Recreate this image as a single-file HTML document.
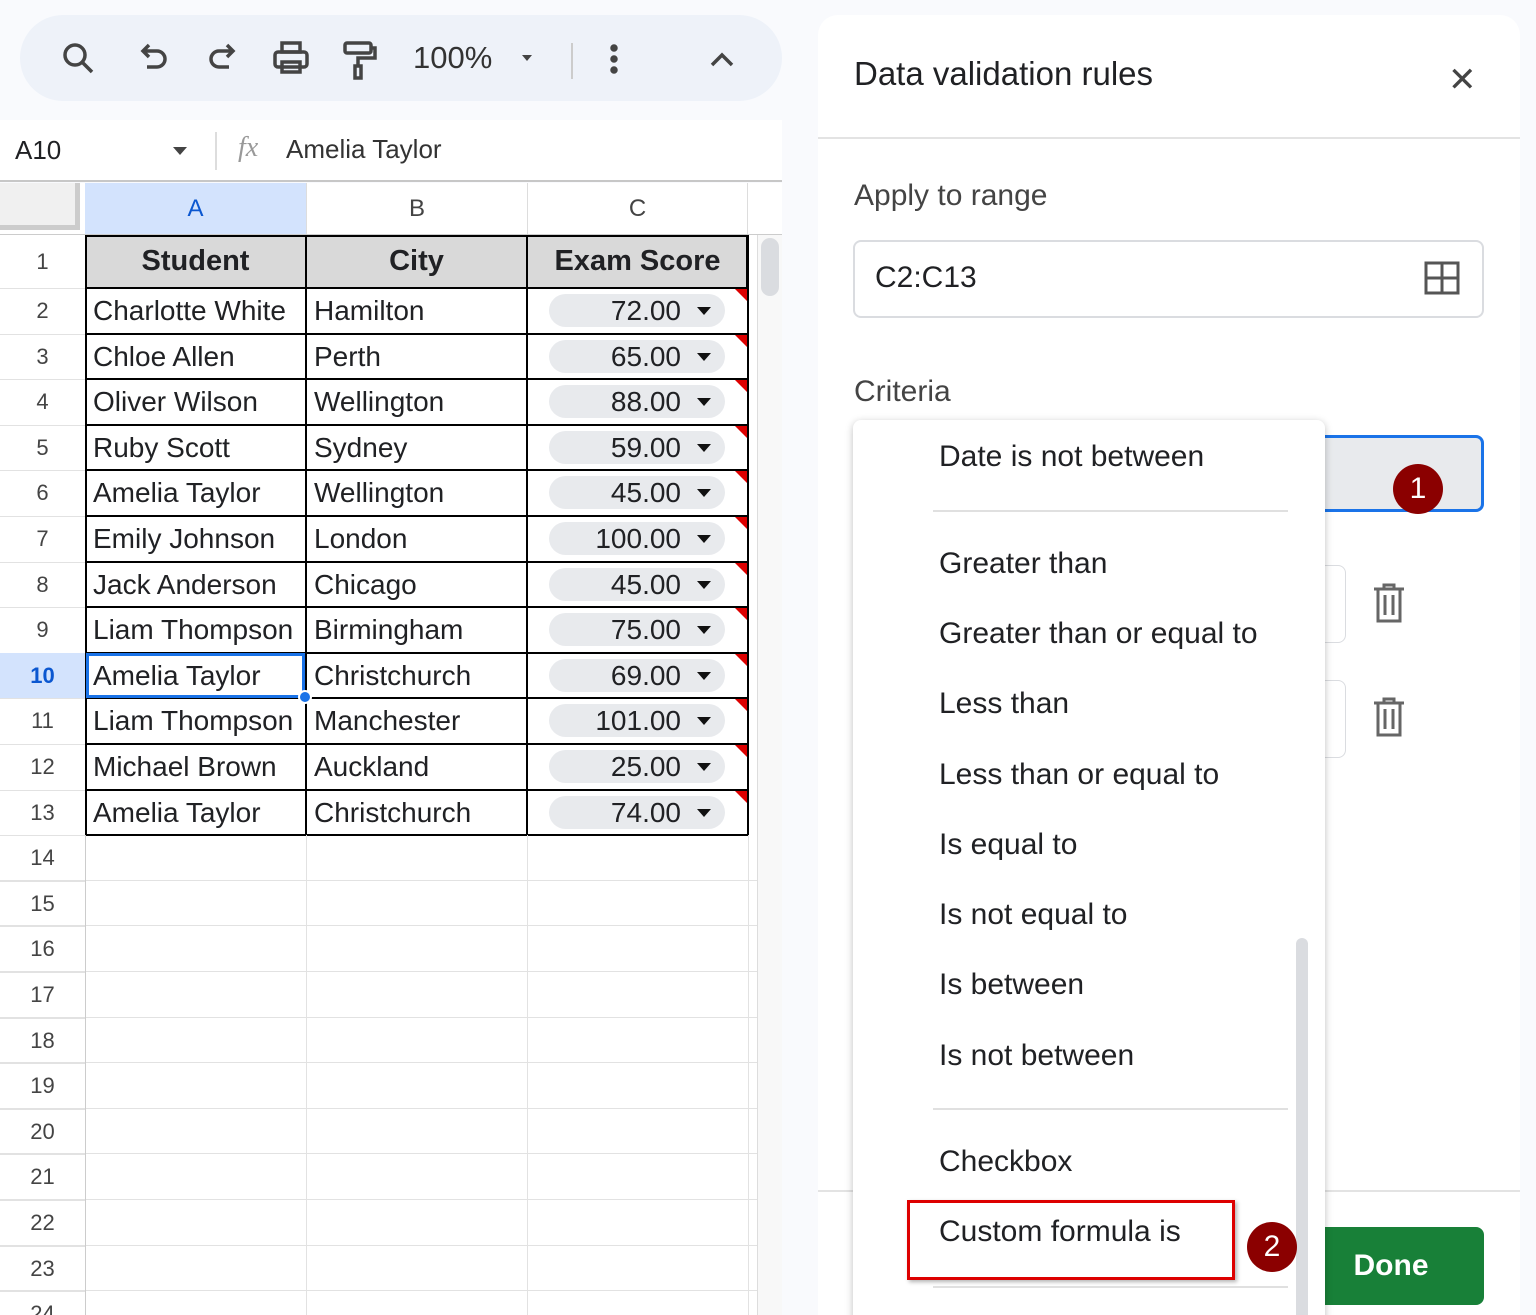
<!DOCTYPE html>
<html style="overflow:hidden;height:1315px"><head><style>
*{margin:0;padding:0;box-sizing:border-box}
body{width:1536px;height:1315px;overflow:hidden;background:#f9fafd;font-family:"Liberation Sans",sans-serif;position:relative;color:#202124}
.abs{position:absolute}
.tb{left:20px;top:15px;width:762px;height:86px;border-radius:43px;background:#eef2f9}
.fbar{left:0;top:120px;width:782px;height:62px;background:#fff;border-bottom:2px solid #c7c7c7}
.grid{left:0;top:183px;width:782px;height:1132px;background:#fff;overflow:hidden}
.cell{position:absolute;font-size:28px;white-space:nowrap;overflow:hidden;line-height:45px}
.rn{position:absolute;left:0;width:85px;text-align:center;font-size:22px;color:#444}
.pill{position:absolute;left:549px;width:176px;height:33px;border-radius:17px;background:#e8eaed}
.panel{left:818px;top:15px;width:702px;height:1340px;background:#fff;border-radius:20px 20px 0 0}
.menu{left:853px;top:420px;width:472px;height:940px;background:#fff;border-radius:8px;box-shadow:0 2px 8px rgba(0,0,0,.25)}
.mi{position:absolute;left:86px;font-size:30px;color:#202124;white-space:nowrap}
.sep{position:absolute;left:80px;width:355px;height:2px;background:#e0e0e0}
.badge{position:absolute;width:50px;height:50px;border-radius:50%;background:#8b0000;color:#fff;font-size:30px;text-align:center;line-height:50px}
</style></head><body>
<div class="abs tb"></div>
<svg class="abs" style="left:55px;top:35px" width="720" height="50" viewBox="0 0 720 50" fill="none" stroke="#444" stroke-width="3.5">
<circle cx="20" cy="20" r="10"/><path d="M27 27l10 10"/>
<path d="M88 16h14a8 8 0 010 16h-10M94 10l-6 6 6 6"/>
<path d="M178 16h-14a8 8 0 000 16h10M172 10l6 6-6 6"/>
<rect x="220" y="17" width="32" height="15" rx="3"/><rect x="227" y="8" width="18" height="9"/><rect x="227" y="27" width="18" height="10"/>
<rect x="290" y="8" width="26" height="10" rx="2"/><path d="M316 13h4v10h-17v8"/><rect x="300" y="31" width="6" height="12"/>
<path d="M467 20l10 0-5 6z" fill="#444" stroke="none"/>
<path d="M517 8v36" stroke="#ccc" stroke-width="2"/>
<circle cx="559" cy="13" r="2" fill="#444"/><circle cx="559" cy="24" r="2" fill="#444"/><circle cx="559" cy="35" r="2" fill="#444"/>
<path d="M657 30l10-10 10 10"/>
</svg>
<div class="abs" style="left:413px;top:40px;font-size:31px;color:#333">100%</div>
<div class="abs fbar">
<div class="abs" style="left:15px;top:15px;font-size:26px">A10</div>
<div class="abs" style="left:173px;top:27px;border:7px solid transparent;border-top:8px solid #444;border-bottom:0"></div>
<div class="abs" style="left:215px;top:12px;width:2px;height:38px;background:#ddd"></div>
<div class="abs" style="left:238px;top:12px;font-size:28px;color:#999;font-style:italic;font-family:'Liberation Serif',serif">fx</div>
<div class="abs" style="left:286px;top:14px;font-size:26px;color:#333">Amelia Taylor</div>
</div>
<div class="abs grid">
<div class="abs" style="left:0;top:0;width:80px;height:47px;background:#f0f0f0;border-right:5px solid #ccc;border-bottom:5px solid #ccc"></div>
<div class="abs" style="left:85px;top:0;width:221px;height:52px;background:#d3e3fd;text-align:center;font-size:24px;line-height:52px;color:#0b57d0">A</div>
<div class="abs" style="left:306px;top:0;width:221px;height:52px;text-align:center;font-size:24px;line-height:52px;color:#444;border-left:1px solid #ddd">B</div>
<div class="abs" style="left:527px;top:0;width:221px;height:52px;text-align:center;font-size:24px;line-height:52px;color:#444;border-left:1px solid #ddd;border-right:1px solid #ddd">C</div>
<div class="abs" style="left:0;top:51px;width:782px;height:1px;background:#ccc"></div>
<div class="abs" style="left:757px;top:52px;width:25px;height:1080px;background:#f8f8f8;border-left:1px solid #ddd"></div>
<div class="abs" style="left:761px;top:55px;width:18px;height:58px;border-radius:9px;background:#dadce0"></div>
<div class="abs" style="left:85px;top:52px;width:663px;height:53px;background:#d9d9d9;border:2px solid #000;border-bottom:none"></div>
<div class="cell" style="left:85px;top:56px;width:221px;text-align:center;font-weight:bold;font-size:29px">Student</div>
<div class="cell" style="left:306px;top:56px;width:221px;text-align:center;font-weight:bold;font-size:29px">City</div>
<div class="cell" style="left:527px;top:56px;width:221px;text-align:center;font-weight:bold;font-size:29px">Exam Score</div>
<div class="abs" style="left:305px;top:52px;width:2px;height:600px;background:#000"></div>
<div class="abs" style="left:526px;top:52px;width:2px;height:600px;background:#000"></div>
<div class="abs" style="left:747px;top:52px;width:2px;height:600px;background:#000"></div>
<div class="abs" style="left:85px;top:52px;width:2px;height:600px;background:#000"></div>
<div id="rows"></div>
</div>
<script>
var d=[["Charlotte White","Hamilton","72.00"],["Chloe Allen","Perth","65.00"],["Oliver Wilson","Wellington","88.00"],["Ruby Scott","Sydney","59.00"],["Amelia Taylor","Wellington","45.00"],["Emily Johnson","London","100.00"],["Jack Anderson","Chicago","45.00"],["Liam Thompson","Birmingham","75.00"],["Amelia Taylor","Christchurch","69.00"],["Liam Thompson","Manchester","101.00"],["Michael Brown","Auckland","25.00"],["Amelia Taylor","Christchurch","74.00"]];
var h='<div class="rn" style="top:66px">1</div>';
for(var i=0;i<23;i++){var t=105+i*45.6;var n=i+2;
 var sel=n==10;
 h+='<div class="abs" style="left:0;top:'+(t-1)+'px;width:757px;height:1px;background:'+(i<=12?'#000':'#e2e2e2')+';'+(i<=12?'left:85px;width:664px;height:2px':'')+'"></div>';
 h+='<div class="abs" style="left:0;top:'+t+'px;width:85px;height:1px;background:#e2e2e2"></div>';
 h+='<div class="rn" style="top:'+(t+10)+'px;'+(sel?'background:#d3e3fd;color:#0b57d0;font-weight:bold;top:'+t+'px;height:45px;line-height:45px':'')+'">'+n+'</div>';
 if(i<12){var r=d[i];
  h+='<div class="cell" style="left:93px;top:'+t+'px;width:212px">'+r[0]+'</div>';
  h+='<div class="cell" style="left:314px;top:'+t+'px;width:212px">'+r[1]+'</div>';
  h+='<div class="pill" style="top:'+(t+6)+'px"></div>';
  h+='<div class="cell" style="left:549px;top:'+t+'px;width:132px;text-align:right">'+r[2]+'</div>';
  h+='<div class="abs" style="left:697px;top:'+(t+19)+'px;border:7px solid transparent;border-top:8px solid #111;border-bottom:0"></div>';
  h+='<div class="abs" style="left:735px;top:'+(t+1)+'px;border-top:12px solid #d00;border-left:12px solid transparent"></div>';
 }
}
h+='<div class="abs" style="left:306px;top:652px;width:1px;height:480px;background:#e2e2e2"></div><div class="abs" style="left:527px;top:652px;width:1px;height:480px;background:#e2e2e2"></div><div class="abs" style="left:748px;top:652px;width:1px;height:480px;background:#e2e2e2"></div><div class="abs" style="left:85px;top:652px;width:1px;height:480px;background:#ccc"></div>';
h+='<div class="abs" style="left:86px;top:'+(105+8*45.6)+'px;width:219px;height:45px;border:3px solid #1a73e8"></div><div class="abs" style="left:298px;top:'+(105+9*45.6-8)+'px;width:14px;height:14px;border-radius:50%;background:#1a73e8;border:2px solid #fff"></div>';
document.getElementById('rows').innerHTML=h;
</script>
<div class="abs panel">
<div class="abs" style="left:36px;top:40px;font-size:33px">Data validation rules</div>
<div class="abs" style="left:630px;top:45px;font-size:34px;color:#444">✕</div>
<div class="abs" style="left:0;top:122px;width:702px;height:2px;background:#e3e3e3"></div>
<div class="abs" style="left:36px;top:164px;font-size:30px;color:#444">Apply to range</div>
<div class="abs" style="left:35px;top:225px;width:631px;height:78px;border:2px solid #dadce0;border-radius:8px"></div>
<div class="abs" style="left:57px;top:246px;font-size:30px">C2:C13</div>
<svg class="abs" style="left:606px;top:246px" width="36" height="34" fill="none" stroke="#555" stroke-width="3"><rect x="2" y="2" width="32" height="30"/><path d="M18 2v30M2 17h32"/></svg>
<div class="abs" style="left:36px;top:360px;font-size:30px;color:#444">Criteria</div>
<div class="abs" style="left:480px;top:420px;width:186px;height:77px;border:3px solid #1a73e8;border-radius:8px;background:#e8eaed"></div>
<div class="abs" style="left:480px;top:550px;width:48px;height:78px;border:1px solid #dadce0;border-radius:8px"></div>
<div class="abs" style="left:480px;top:665px;width:48px;height:78px;border:1px solid #dadce0;border-radius:8px"></div>
<svg class="abs" style="left:552px;top:568px" width="40" height="160" fill="none" stroke="#666" stroke-width="3"><path d="M4 6h30M14 6V2h10v4M8 6v32h22V6M15 12v20M23 12v20"/><path transform="translate(0,114)" d="M4 6h30M14 6V2h10v4M8 6v32h22V6M15 12v20M23 12v20"/></svg>
<div class="abs" style="left:0;top:1175px;width:702px;height:2px;background:#e3e3e3"></div>
<div class="abs" style="left:480px;top:1212px;width:186px;height:78px;background:#188038;border-radius:8px;color:#fff;font-size:30px;text-align:center;line-height:78px;font-weight:bold">Done</div>
</div>
<div class="abs menu">
<div class="mi" style="top:20px">Date is not between</div>
<div class="sep" style="top:90px"></div>
<div class="mi" style="top:127px">Greater than</div>
<div class="mi" style="top:197px">Greater than or equal to</div>
<div class="mi" style="top:267px">Less than</div>
<div class="mi" style="top:338px">Less than or equal to</div>
<div class="mi" style="top:408px">Is equal to</div>
<div class="mi" style="top:478px">Is not equal to</div>
<div class="mi" style="top:548px">Is between</div>
<div class="mi" style="top:619px">Is not between</div>
<div class="sep" style="top:688px"></div>
<div class="mi" style="top:725px">Checkbox</div>
<div class="mi" style="top:795px">Custom formula is</div>
<div class="sep" style="top:866px"></div>
<div class="abs" style="left:443px;top:518px;width:12px;height:420px;background:#dadce0;border-radius:6px"></div>
<div class="abs" style="left:54px;top:780px;width:328px;height:80px;border:3px solid #d00;box-shadow:2px 2px 4px rgba(0,0,0,.3)"></div>
</div>
<div class="badge" style="left:1393px;top:464px">1</div>
<div class="badge" style="left:1247px;top:1222px">2</div>
</body></html>
